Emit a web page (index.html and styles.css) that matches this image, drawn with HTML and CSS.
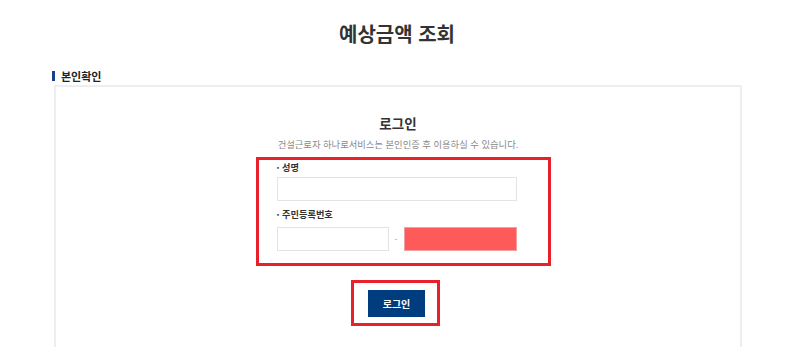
FILE: index.html
```html
<!DOCTYPE html>
<html lang="ko">
<head>
<meta charset="utf-8">
<title>예상금액 조회</title>
<link rel="stylesheet" href="styles.css">
</head>
<body>
<div class="page">
  <h1 class="page-title">예상금액 조회</h1>
  <h2 class="section-title">본인확인</h2>
  <div class="login-box">
    <h3 class="login-title">로그인</h3>
    <p class="login-desc">건설근로자 하나로서비스는 본인인증 후 이용하실 수 있습니다.</p>
    <div class="highlight fields">
      <div class="field">
        <label class="field-label">· 성명</label>
        <input class="text-input wide" type="text">
      </div>
      <div class="field">
        <label class="field-label">· 주민등록번호</label>
        <div class="id-row">
          <input class="text-input half" type="text">
          <span class="dash">-</span>
          <div class="masked"></div>
        </div>
      </div>
    </div>
    <div class="btn-row">
      <div class="highlight btn-wrap">
        <button class="login-btn" type="button">로그인</button>
      </div>
    </div>
  </div>
</div>
</body>
</html>
```
FILE: styles.css
```css
html, body {
  margin: 0;
  padding: 0;
  background: #fff;
}
body {
  font-family: "Noto Sans CJK KR", "Noto Sans", sans-serif;
  color: #333;
  overflow: hidden;
}
.page {
  width: 690px;
  margin-left: 52px;
}
.page-title {
  margin: 0;
  padding-top: 19px;
  font-size: 20px;
  line-height: 30px;
  font-weight: 700;
  text-align: center;
  color: #333;
}
.section-title {
  margin: 22px 0 0 0;
  border-left: 3px solid #1c3f8c;
  padding-left: 6px;
  font-size: 11px;
  line-height: 10px;
  height: 10px;
  font-weight: 700;
  color: #222;
}
.login-box {
  margin: 4px 0 0 2px;
  border: 2px solid #eeeeee;
  height: 300px;
  display: flex;
  flex-direction: column;
  align-items: center;
}
.login-title {
  margin: 28px 0 0 0;
  font-size: 13.5px;
  line-height: 16px;
  font-weight: 700;
  color: #333;
}
.login-desc {
  margin: 6px 0 0 0;
  font-size: 9.3px;
  line-height: 14px;
  color: #888;
}
.highlight {
  border: 3px solid #e8202a;
}
.fields {
  margin: 6px 0 0 10px;
  width: 240px;
  padding: 2px 31px 12px 18px;
  display: flex;
  flex-direction: column;
  gap: 8px;
}
.field {
  display: flex;
  flex-direction: column;
}
.field-label {
  font-size: 9.2px;
  line-height: 10px;
  font-weight: 700;
  color: #333;
  margin: 0 0 5px 0;
}
.text-input {
  box-sizing: border-box;
  height: 24px;
  border: 1px solid #e3e3e3;
  margin: 0;
  padding: 0;
  background: #fff;
}
.wide {
  width: 240px;
}
.id-row {
  display: flex;
  align-items: center;
  margin-top: 3px;
}
.half {
  width: 112px;
}
.dash {
  width: 15px;
  text-align: center;
  font-size: 9px;
  color: #aaa;
}
.masked {
  box-sizing: border-box;
  width: 113px;
  height: 24px;
  background: #ff5a5a;
  border: 1px solid #f0a0a0;
}
.btn-row {
  margin-top: 14px;
  display: flex;
  justify-content: center;
}
.btn-wrap {
  margin-right: 5px;
  padding: 7px 12px 6px 14px;
}
.login-btn {
  display: block;
  width: 57px;
  height: 27px;
  border: 0;
  background: #003d7e;
  color: #fff;
  font-family: inherit;
  font-size: 10px;
  font-weight: 700;
  padding: 0;
}
```
